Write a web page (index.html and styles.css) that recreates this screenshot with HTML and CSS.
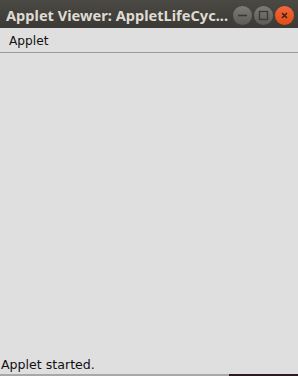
FILE: index.html
```html
<!DOCTYPE html>
<html lang="en">
<head>
    <meta charset="UTF-8">
    <title>Applet Viewer</title>
    <link rel="stylesheet" href="styles.css">
</head>
<body>
    <div id="window">
        <div id="titlebar">
            <div class="title">Applet Viewer: AppletLifeCyc...</div>
            <div class="controls">
                <span class="btn">
                    <svg width="19" height="19" viewBox="0 0 19 19"><line x1="5" y1="9.5" x2="14" y2="9.5" stroke="#3a3935" stroke-width="1.6"/></svg>
                </span>
                <span class="btn">
                    <svg width="19" height="19" viewBox="0 0 19 19"><rect x="5.5" y="5.5" width="8" height="8" fill="none" stroke="#3a3935" stroke-width="1.3"/></svg>
                </span>
                <span class="btn close">
                    <svg width="19" height="19" viewBox="0 0 19 19"><path d="M7 7 L12 12 M12 7 L7 12" stroke="#3a2218" stroke-width="1.5"/></svg>
                </span>
            </div>
        </div>
        <div id="menubar">
            <span class="menu">Applet</span>
        </div>
        <div id="content"></div>
        <div id="status">Applet started.</div>
        <div id="bottom">
            <div class="left"></div>
            <div class="right"></div>
        </div>
    </div>
</body>
</html>
```

FILE: styles.css
```css
body {
    margin: 0;
    background-color: #dfdfdf;
    font-family: "DejaVu Sans", sans-serif;
}

#window {
    width: 298px;
    height: 376px;
    display: flex;
    flex-direction: column;
    overflow: hidden;
}

#titlebar {
    height: 28px;
    background: linear-gradient(#4a4944, #3b3a36);
    display: flex;
    align-items: center;
    padding: 2px 4px 0 6px;
    box-sizing: border-box;
}

.title {
    flex: 1;
    min-width: 0;
    color: #dfdbd2;
    font-family: "Noto Sans", sans-serif;
    font-weight: bold;
    font-size: 14.6px;
    white-space: nowrap;
    overflow: hidden;
}

.controls {
    display: flex;
    gap: 2px;
    flex-shrink: 0;
}

.btn {
    width: 19px;
    height: 19px;
    border-radius: 50%;
    background: linear-gradient(#7d7c77, #5b5a56);
    display: flex;
}

.btn.close {
    background: linear-gradient(#f3683a, #e24b17);
}

#menubar {
    background-color: #dfdfdf;
    border-bottom: 1px solid #999999;
    display: flex;
    align-items: center;
    padding-left: 9px;
    padding-top: 1px;
    box-sizing: border-box;
    height: 25px;
}

.menu {
    font-size: 12.2px;
    color: #111111;
}

#content {
    flex: 1;
    background-color: #dfdfdf;
}

#status {
    font-size: 12.6px;
    color: #111111;
    padding-left: 1px;
    height: 17px;
}

#bottom {
    height: 2px;
    display: flex;
}

#bottom .left {
    width: 229px;
    background-color: #a8a8a8;
}

#bottom .right {
    flex: 1;
    background-color: #2e1a22;
}
```
